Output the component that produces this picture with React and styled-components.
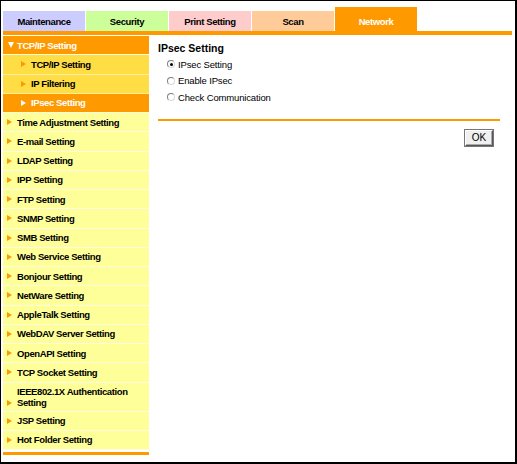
import React from 'react';
import styled, { createGlobalStyle } from 'styled-components';

const GlobalStyle = createGlobalStyle`
  html, body {
    margin: 0;
    padding: 0;
    background: #fff;
  }
  body {
    font-family: "Liberation Sans", Arial, sans-serif;
  }
`

const Frame = styled.div`
  box-sizing: border-box;
  width: 517px;
  height: 464px;
  border-top: 1px solid #000;
  border-left: 1px solid #000;
  border-right: 2px solid #000;
  border-bottom: 2px solid #000;
  padding: 6px 3px 0 2px;
  overflow: hidden;
`

const TabBar = styled.div`
  display: flex;
  align-items: flex-end;
  height: 24px;
`

const Tab = styled.div`
  box-sizing: border-box;
  width: 83px;
  height: ${p => (p.active ? '24px' : '20px')};
  background: ${p => p.bg};
  border-right: 1px solid #fff;
  color: ${p => (p.active ? '#fff' : '#000')};
  font-size: 9.5px;
  letter-spacing: -0.4px;
  font-weight: bold;
  display: flex;
  align-items: center;
  justify-content: center;
  padding-top: ${p => (p.active ? '5px' : '1px')};
`

const TabLine = styled.div`
  height: 4px;
  width: 509px;
  background: #ff9900;
`

const Body = styled.div`
  display: flex;
  margin-top: 1px;
`

const Sidebar = styled.div`
  width: 146px;
  display: flex;
  flex-direction: column;
  border-bottom: 3px solid #ff9900;
  padding-bottom: 2px;
`

const Item = styled.div`
  box-sizing: border-box;
  min-height: 19.25px;
  border-bottom: 1px solid ${p => (p.kind === 'sub' ? '#ffeea0' : '#fffbe0')};
  background: ${p => (p.kind === 'head' || p.kind === 'sel' ? '#ff9900' : p.kind === 'sub' ? '#ffdd44' : '#ffff99')};
  color: ${p => (p.kind === 'head' || p.kind === 'sel' ? '#fff' : '#000')};
  font-size: 9.5px;
  letter-spacing: -0.4px;
  font-weight: bold;
  display: flex;
  align-items: ${p => (p.tall ? 'flex-end' : 'center')};
  padding: ${p => (p.tall ? '3px 4px 3px' : '0 4px')};
  padding-left: ${p => (p.indent ? '18px' : '4px')};
  line-height: 11px;
`

const Arrow = styled.span`
  flex: none;
  width: 0;
  height: 0;
  border-top: 3.5px solid transparent;
  border-bottom: 3.5px solid transparent;
  border-left: 5px solid ${p => (p.white ? '#fff' : '#ff9900')};
  margin-right: 5px;
  margin-bottom: ${p => (p.tall ? '2px' : '0')};
`

const Down = styled.span`
  flex: none;
  width: 0;
  height: 0;
  border-left: 3px solid transparent;
  border-right: 3px solid transparent;
  border-top: 6px solid #fff;
  margin: 0 3px 0 1px;
`

const Content = styled.div`
  flex: 1;
  padding: 3px 12px 0 9px;
`

const Title = styled.h2`
  margin: 0;
  font-size: 10.5px;
  font-weight: bold;
  color: #000;
  height: 17px;
  display: flex;
  align-items: center;
`

const RadioList = styled.div`
  display: flex;
  flex-direction: column;
  padding-left: 9px;
`

const RadioRow = styled.label`
  display: flex;
  align-items: center;
  height: 16.5px;
  font-size: 9.5px;
  letter-spacing: -0.15px;
  color: #000;
`

const Dot = styled.span`
  box-sizing: border-box;
  width: 8px;
  height: 8px;
  border-radius: 50%;
  border: 1px solid #808080;
  border-right-color: #d8d8d8;
  border-bottom-color: #d8d8d8;
  background: #fff;
  margin-right: 3px;
  display: flex;
  align-items: center;
  justify-content: center;
  &::after {
    content: '';
    width: 3px;
    height: 3px;
    border-radius: 50%;
    background: ${p => (p.checked ? '#000' : 'transparent')};
  }
`

const Rule = styled.div`
  height: 2px;
  background: #ff9900;
  margin-top: 13px;
`

const Actions = styled.div`
  display: flex;
  justify-content: flex-end;
  padding-top: 9px;
  padding-right: 7px;
`

const Button = styled.button`
  box-sizing: border-box;
  width: 28px;
  height: 16px;
  padding: 0;
  font-family: "Liberation Sans", Arial, sans-serif;
  font-size: 10px;
  background: #f0f0f0;
  border: 1px solid;
  border-color: #fff #555 #555 #fff;
  box-shadow: inset -1px -1px 0 #aaa, 0 0 0 1px #777;
  color: #000;
`

const tabs = [
  { label: 'Maintenance', bg: '#ccccff' },
  { label: 'Security', bg: '#ccff99' },
  { label: 'Print Setting', bg: '#ffcccc' },
  { label: 'Scan', bg: '#ffcc99' },
  { label: 'Network', bg: '#ff9900', active: true },
]

const menu = [
  'Time Adjustment Setting',
  'E-mail Setting',
  'LDAP Setting',
  'IPP Setting',
  'FTP Setting',
  'SNMP Setting',
  'SMB Setting',
  'Web Service Setting',
  'Bonjour Setting',
  'NetWare Setting',
  'AppleTalk Setting',
  'WebDAV Server Setting',
  'OpenAPI Setting',
  'TCP Socket Setting',
]

export default function App() {
  return (
    <Frame>
      <GlobalStyle />
      <TabBar>
        {tabs.map(t => (
          <Tab key={t.label} bg={t.bg} active={t.active}>{t.label}</Tab>
        ))}
      </TabBar>
      <TabLine />
      <Body>
        <Sidebar>
          <Item kind="head"><Down />TCP/IP Setting</Item>
          <Item kind="sub" indent><Arrow />TCP/IP Setting</Item>
          <Item kind="sub" indent><Arrow />IP Filtering</Item>
          <Item kind="sel" indent><Arrow white />IPsec Setting</Item>
          {menu.map(m => (
            <Item key={m}><Arrow />{m}</Item>
          ))}
          <Item tall>
            <Arrow tall />
            <span>IEEE802.1X Authentication<br />Setting</span>
          </Item>
          <Item><Arrow />JSP Setting</Item>
          <Item><Arrow />Hot Folder Setting</Item>
        </Sidebar>
        <Content>
          <Title>IPsec Setting</Title>
          <RadioList>
            <RadioRow><Dot checked />IPsec Setting</RadioRow>
            <RadioRow><Dot />Enable IPsec</RadioRow>
            <RadioRow><Dot />Check Communication</RadioRow>
          </RadioList>
          <Rule />
          <Actions>
            <Button>OK</Button>
          </Actions>
        </Content>
      </Body>
    </Frame>
  );
}
